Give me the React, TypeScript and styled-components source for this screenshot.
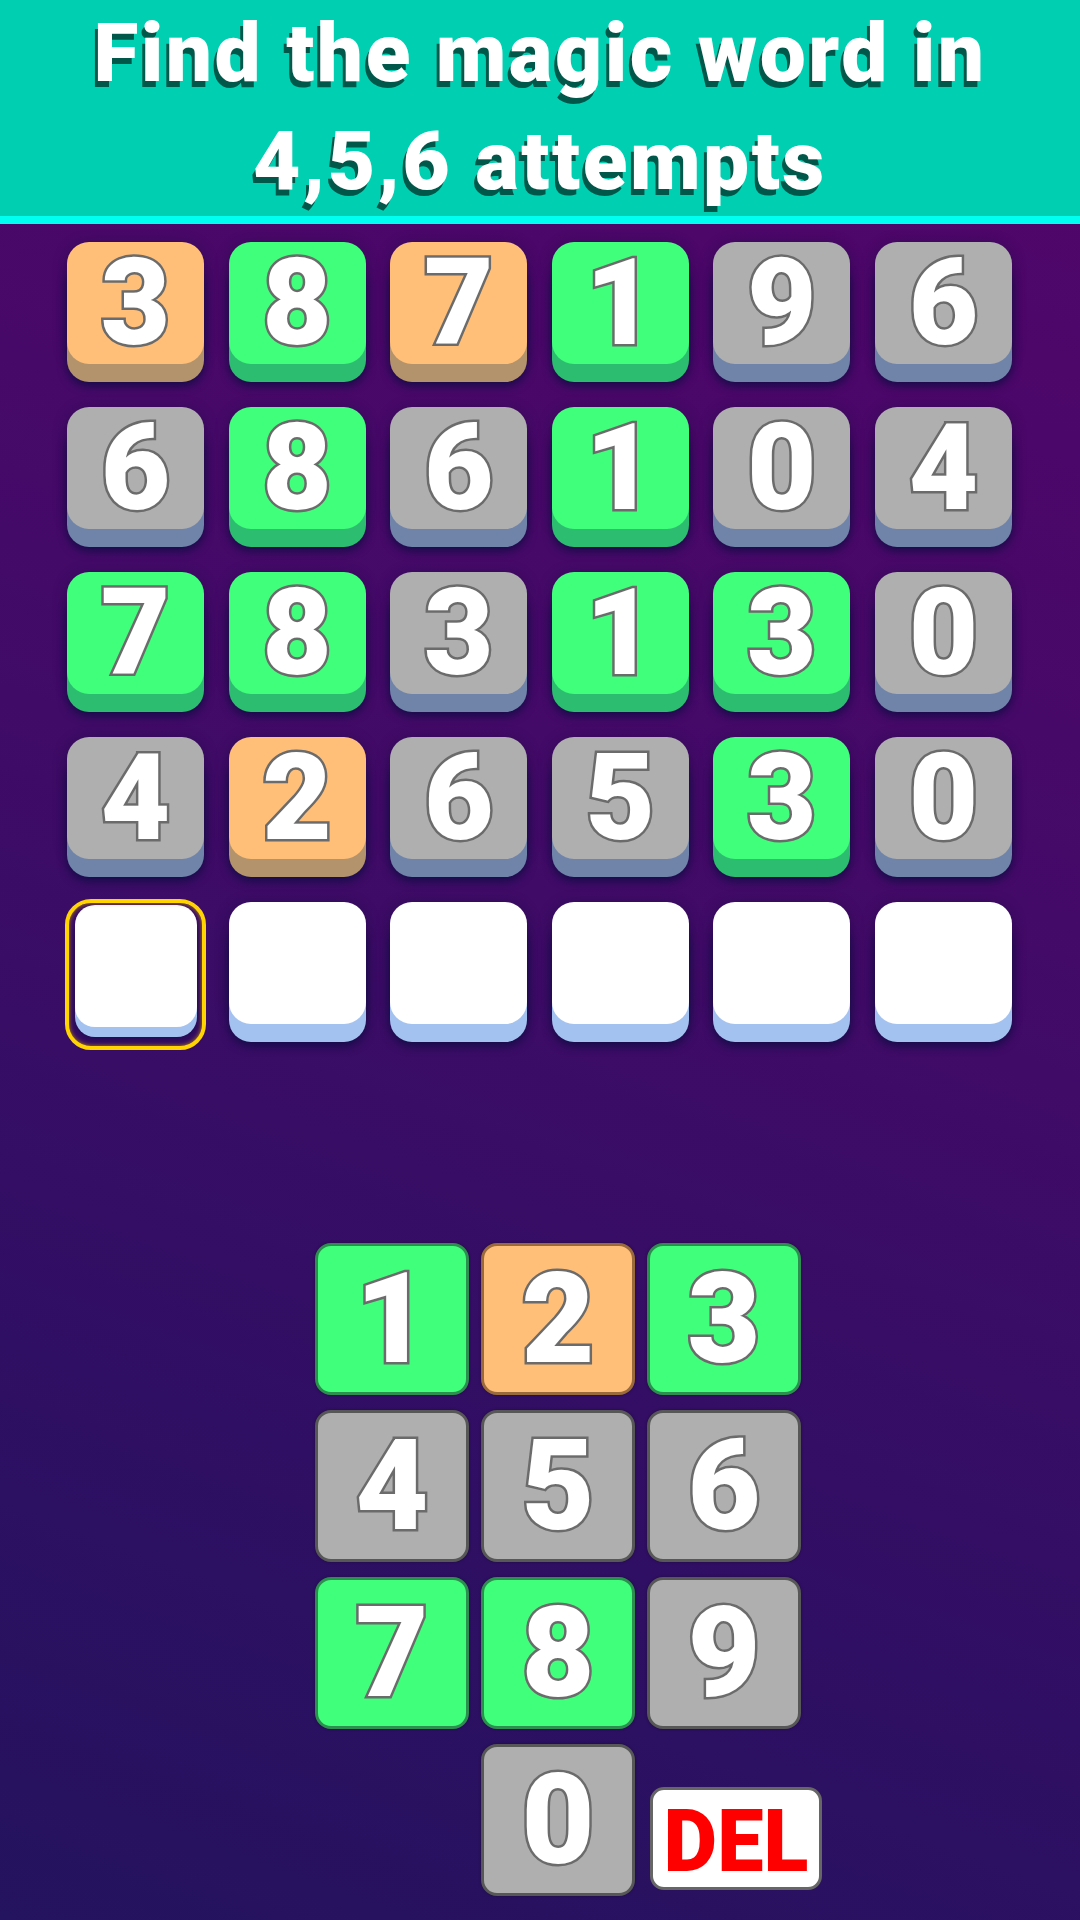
import React from 'react';
import styled, { createGlobalStyle, css } from 'styled-components';

type Kind = 'orange' | 'green' | 'gray' | 'white';

const faces: Record<Kind, string> = {
  orange: '#ffbf78',
  green: '#40ff7b',
  gray: '#afafaf',
  white: '#ffffff',
};

const edges: Record<Kind, string> = {
  orange: '#b2936b',
  green: '#2dbd70',
  gray: '#6f84a8',
  white: '#a4c2f0',
};

const keyBorders: Record<Kind, string> = {
  orange: '#9a6a3c',
  green: '#2c8f4f',
  gray: '#575757',
  white: '#666666',
};

const board: [string, Kind][][] = [
  [['3', 'orange'], ['8', 'green'], ['7', 'orange'], ['1', 'green'], ['9', 'gray'], ['6', 'gray']],
  [['6', 'gray'], ['8', 'green'], ['6', 'gray'], ['1', 'green'], ['0', 'gray'], ['4', 'gray']],
  [['7', 'green'], ['8', 'green'], ['3', 'gray'], ['1', 'green'], ['3', 'green'], ['0', 'gray']],
  [['4', 'gray'], ['2', 'orange'], ['6', 'gray'], ['5', 'gray'], ['3', 'green'], ['0', 'gray']],
];

const keys: [string, Kind][] = [
  ['1', 'green'], ['2', 'orange'], ['3', 'green'],
  ['4', 'gray'], ['5', 'gray'], ['6', 'gray'],
  ['7', 'green'], ['8', 'green'], ['9', 'gray'],
];

const GlobalStyle = createGlobalStyle`
  html, body {
    margin: 0;
    padding: 0;
    background: #2a1060;
  }
  body {
    overflow: hidden;
  }
`;

const Page = styled.div`
  width: 1080px;
  height: 1920px;
  display: flex;
  flex-direction: column;
  background: linear-gradient(200deg, #52056a 0%, #440a68 40%, #2f0f63 75%, #24135e 100%);
  overflow: hidden;
`;

const Header = styled.header`
  height: 216px;
  background: #00cfb1;
  border-bottom: 8px solid #00fff0;
  display: flex;
  align-items: center;
  justify-content: center;
  flex-shrink: 0;
`;

const Title = styled.h1`
  margin: 0;
  margin-top: -2px;
  font-family: Roboto, Lato, sans-serif;
  font-weight: 900;
  font-size: 82px;
  line-height: 108px;
  color: #ffffff;
  text-align: center;
  letter-spacing: 2.5px;
  text-shadow: -3px 6px 0 #00574a;
`;

const digitText = css`
  font-family: Roboto, 'Open Sans', sans-serif;
  font-weight: 900;
  color: #ffffff;
  -webkit-text-stroke: 5px #6b6b6b;
  paint-order: stroke fill;
`;

const Board = styled.div`
  display: grid;
  grid-template-columns: repeat(6, 137px);
  grid-auto-rows: 122px;
  column-gap: 24.6px;
  row-gap: 43px;
  padding: 18px 0 0 67px;
`;

const Tile = styled.div<{ $kind: Kind }>`
  width: 137px;
  height: 122px;
  border-radius: 22px;
  background: ${(p) => faces[p.$kind]};
  box-shadow: 0 18px 0 ${(p) => edges[p.$kind]}, 0 22px 10px rgba(6, 14, 60, 0.75),
    0 2px 14px rgba(20, 10, 60, 0.45);
  display: flex;
  align-items: center;
  justify-content: center;
  ${digitText};
  font-size: 120px;
  line-height: 1;
`;

const Slot = styled.div`
  position: relative;
  width: 137px;
  height: 122px;
`;

const SmallTile = styled.div`
  width: 122px;
  height: 122px;
  margin: 3px 0 0 8px;
  border-radius: 20px;
  background: #ffffff;
  box-shadow: 0 10px 0 #a4c2f0, 0 12px 6px rgba(6, 14, 60, 0.6);
`;

const Ring = styled.div`
  position: absolute;
  top: -3px;
  left: -2px;
  right: -2px;
  bottom: -26px;
  border: 4px solid #ffd400;
  border-radius: 26px;
  box-shadow: inset 0 0 4px #b38a00;
  pointer-events: none;
`;

const Keypad = styled.div`
  display: grid;
  grid-template-columns: repeat(3, 154px);
  grid-auto-rows: 152px;
  column-gap: 12px;
  row-gap: 15px;
  margin-top: 219px;
  padding-left: 315px;
`;

const Key = styled.button<{ $kind: Kind }>`
  padding: 0;
  border: 3px solid ${(p) => keyBorders[p.$kind]};
  border-radius: 16px;
  background: ${(p) => faces[p.$kind]};
  display: flex;
  align-items: center;
  justify-content: center;
  ${digitText};
  font-size: 126px;
  line-height: 1;
  box-shadow: 0 0 3px rgba(0, 0, 0, 0.35);
`;

const ZeroKey = styled(Key)`
  grid-column: 2;
`;

const DelKey = styled.button`
  grid-column: 3;
  justify-self: start;
  align-self: end;
  width: 172px;
  height: 103px;
  margin: 0 0 6px 3px;
  padding: 0;
  border: 3px solid #666666;
  border-radius: 14px;
  background: #ffffff;
  display: flex;
  align-items: center;
  justify-content: center;
`;

const DelText = styled.span`
  display: inline-block;
  font-family: Roboto, 'Liberation Sans', sans-serif;
  font-weight: 900;
  font-size: 88px;
  line-height: 1;
  color: #ff0000;
  transform: scaleX(0.94);
  margin-top: 4px;
`;

export default function App() {
  return (
    <>
      <GlobalStyle />
      <Page>
        <Header>
          <Title>
            Find the magic word in
            <br />
            4,5,6 attempts
          </Title>
        </Header>
        <Board>
          {board.map((row, r) =>
            row.map(([digit, kind], c) => (
              <Tile key={`${r}-${c}`} $kind={kind}>
                {digit}
              </Tile>
            )),
          )}
          <Slot>
            <SmallTile />
            <Ring />
          </Slot>
          {[1, 2, 3, 4, 5].map((i) => (
            <Tile key={`empty-${i}`} $kind="white" />
          ))}
        </Board>
        <Keypad>
          {keys.map(([digit, kind]) => (
            <Key key={digit} $kind={kind}>
              {digit}
            </Key>
          ))}
          <ZeroKey $kind="gray">0</ZeroKey>
          <DelKey>
            <DelText>DEL</DelText>
          </DelKey>
        </Keypad>
      </Page>
    </>
  );
}
